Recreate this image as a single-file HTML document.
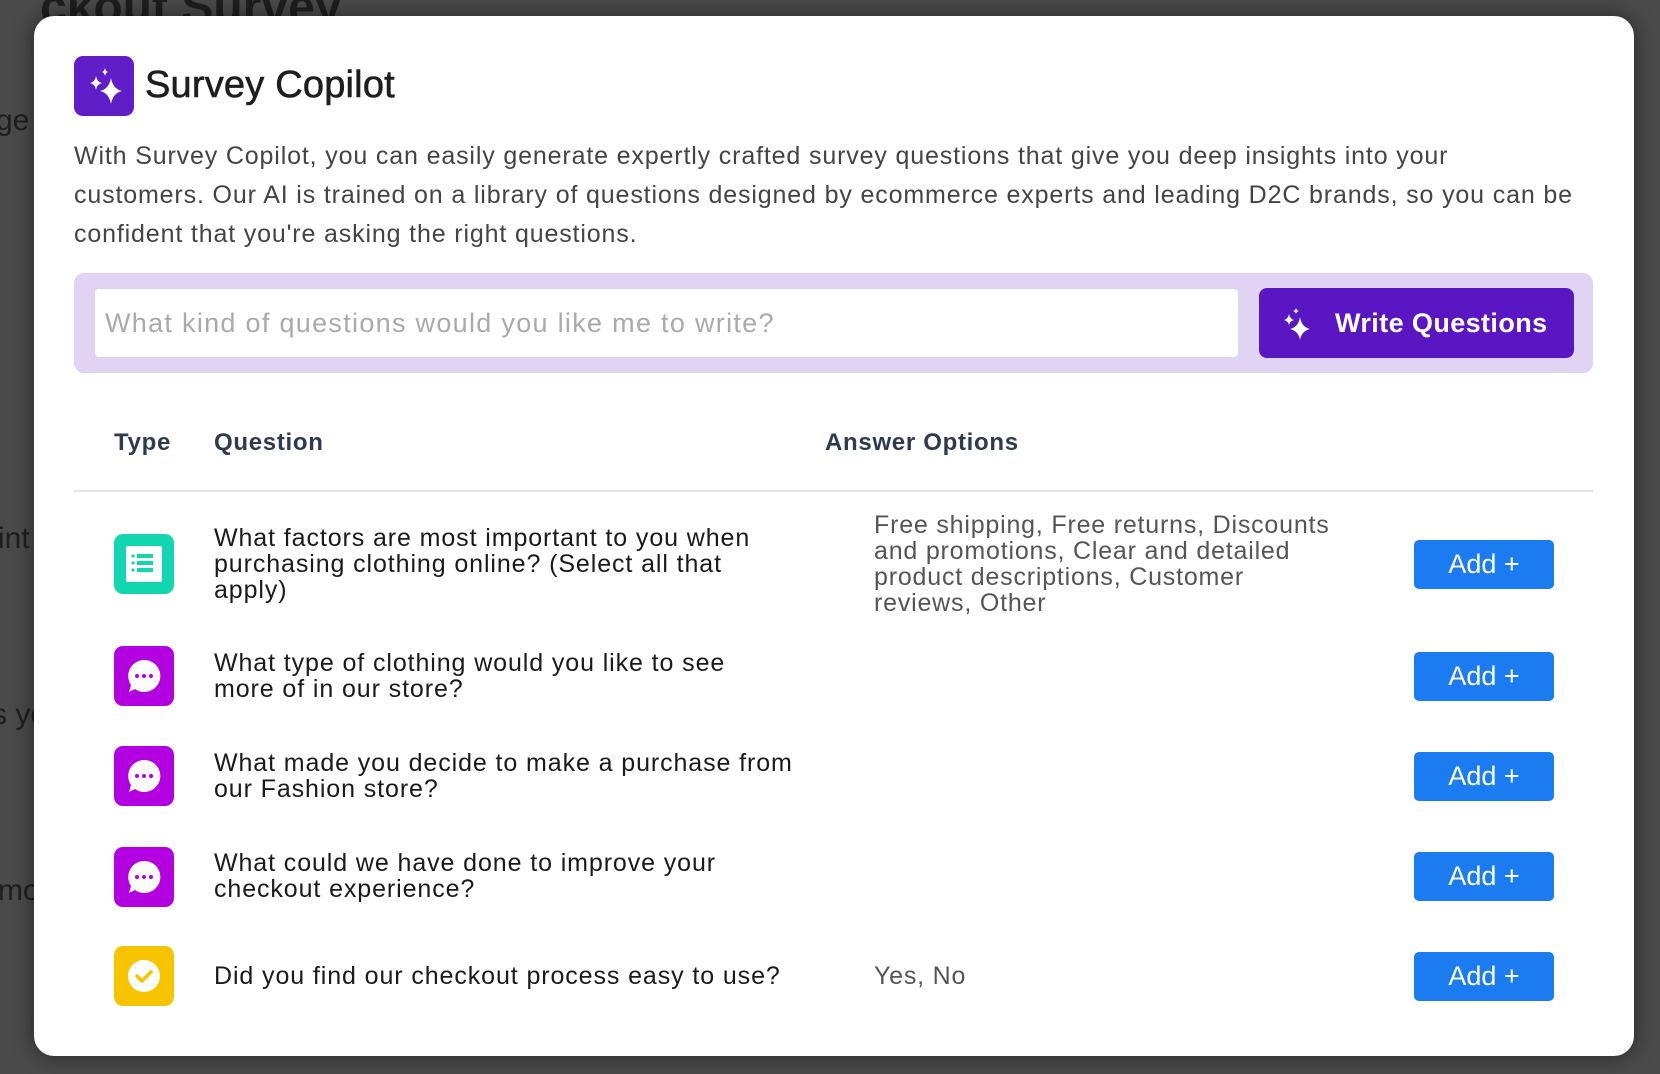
<!DOCTYPE html>
<html><head><meta charset="utf-8"><style>
*{box-sizing:border-box;margin:0;padding:0}
body{width:1660px;height:1074px;background:#4a4a4a;font-family:"Liberation Sans",sans-serif;position:relative;overflow:hidden}
.bg{position:absolute;color:#1e1e1e;font-size:30px}
.modal{position:absolute;left:34px;top:16px;width:1600px;height:1040px;background:#fff;border-radius:20px;box-shadow:0 0 20px rgba(0,0,0,.5)}
.abs{position:absolute;white-space:nowrap}
.logo{left:40px;top:40px;width:60px;height:60px;border-radius:9px;background:#5f1ec8}
.title{left:111px;top:47px;font-size:38px;color:#1e1e1e;line-height:44px;letter-spacing:0.2px;-webkit-text-stroke:0.6px #1e1e1e}
.desc{left:40px;top:121px;font-size:25px;line-height:39px;color:#444;letter-spacing:0.85px}
.box{left:40px;top:257px;width:1519px;height:100px;background:#e0d3f3;border-radius:10px}
.inp{left:61px;top:273px;width:1143px;height:68px;background:#fff;border-radius:4px;font-size:27px;color:#aaa;padding-left:10px;line-height:68px;letter-spacing:1.3px}
.btn{left:1225px;top:272px;width:315px;height:70px;background:#5b16c4;border-radius:8px;color:#fff;font-weight:bold;font-size:27px;line-height:70px;letter-spacing:0.4px}
.hd{top:411px;font-size:24px;font-weight:bold;color:#2d3a4f;line-height:32px;letter-spacing:0.7px}
.div{left:40px;top:474px;width:1519px;height:2px;background:#e4e4e4}
.ic{left:80px;width:60px;height:60px;border-radius:9px}
.q{left:180px;font-size:25px;line-height:26px;color:#1a1a1a;letter-spacing:0.9px}
.a{left:840px;font-size:25px;line-height:26px;color:#555;letter-spacing:0.8px}
.add{left:1380px;width:140px;height:49px;background:#1a7cf0;border-radius:5px;color:#fff;font-size:27px;line-height:49px;text-align:center}
</style></head><body>
<div class="bg" style="left:40px;top:-20px;font-size:48px;font-weight:bold">ckout Survey</div>
<div class="bg" style="left:-4px;top:104px">ge</div>
<div class="bg" style="left:-2px;top:522px">int</div>
<div class="bg" style="left:-8px;top:698px">s yo</div>
<div class="bg" style="left:-2px;top:874px">mo</div>
<div class="modal">
<div class="abs logo"><svg width="60" height="60" viewBox="0 0 60 60"><path d="M37 22 Q39 33 48 35 Q39 37 37 48 Q35 37 26 35 Q35 33 37 22Z" fill="#fff"/><path d="M22 20 Q23 26 28 27 Q23 28 22 34 Q21 28 16 27 Q21 26 22 20Z" fill="#fff"/><path d="M31 12 Q31.7 15.3 34 16 Q31.7 16.7 31 20 Q30.3 16.7 28 16 Q30.3 15.3 31 12Z" fill="#fff"/></svg></div>
<div class="abs title">Survey Copilot</div>
<div class="abs desc">With Survey Copilot, you can easily generate expertly crafted survey questions that give you deep insights into your<br>customers. Our AI is trained on a library of questions designed by ecommerce experts and leading D2C brands, so you can be<br>confident that you're asking the right questions.</div>
<div class="abs box"></div>
<div class="abs inp">What kind of questions would you like me to write?</div>
<div class="abs btn"><svg class="abs" style="left:20px;top:15px" width="40" height="40" viewBox="0 0 40 40"><path d="M21 14 Q22.5 24 31 26 Q22.5 28 21 37 Q19.5 28 11 26 Q19.5 24 21 14Z" fill="#fff"/><path d="M10 11 Q11 16 15 17 Q11 18 10 22 Q9 18 5 17 Q9 16 10 11Z" fill="#fff"/><path d="M17 5 Q17.6 7.5 20 8 Q17.6 8.5 17 11 Q16.4 8.5 14 8 Q16.4 7.5 17 5Z" fill="#fff"/></svg><span class="abs" style="left:76px">Write Questions</span></div>
<div class="abs hd" style="left:80px">Type</div>
<div class="abs hd" style="left:180px">Question</div>
<div class="abs hd" style="left:791px">Answer Options</div>
<div class="abs div"></div>

<div class="abs ic" style="top:518px;background:#12d6b0"><svg width="60" height="60"><rect x="12" y="12" width="36" height="36" rx="2" fill="#fff"/><circle cx="19" cy="22" r="1.6" fill="#12d6b0"/><circle cx="19" cy="29" r="1.6" fill="#12d6b0"/><circle cx="19" cy="36" r="1.6" fill="#12d6b0"/><rect x="23" y="20" width="16" height="4" fill="#12d6b0"/><rect x="23" y="27" width="16" height="4" fill="#12d6b0"/><rect x="23" y="34" width="16" height="4" fill="#12d6b0"/></svg></div>
<div class="abs q" style="top:509px">What factors are most important to you when<br>purchasing clothing online? (Select all that<br>apply)</div>
<div class="abs a" style="top:496px">Free shipping, Free returns, Discounts<br>and promotions, Clear and detailed<br>product descriptions, Customer<br>reviews, Other</div>
<div class="abs add" style="top:524px">Add +</div>

<svg width="0" height="0" style="position:absolute"><defs><g id="chat"><path d="M30 14 a16 16 0 1 1 -9 29 l-6 3 l2 -7 a16 16 0 0 1 13 -25Z" fill="#fff"/><circle cx="23" cy="30" r="2" fill="#b300e0"/><circle cx="30" cy="30" r="2" fill="#b300e0"/><circle cx="37" cy="30" r="2" fill="#b300e0"/></g></defs></svg>
<div class="abs ic" style="top:630px;background:#b300e0"><svg width="60" height="60"><use href="#chat"/></svg></div>
<div class="abs q" style="top:634px">What type of clothing would you like to see<br>more of in our store?</div>
<div class="abs add" style="top:636px">Add +</div>

<div class="abs ic" style="top:730px;background:#b300e0"><svg width="60" height="60"><use href="#chat"/></svg></div>
<div class="abs q" style="top:734px">What made you decide to make a purchase from<br>our Fashion store?</div>
<div class="abs add" style="top:736px">Add +</div>

<div class="abs ic" style="top:831px;background:#b300e0"><svg width="60" height="60"><use href="#chat"/></svg></div>
<div class="abs q" style="top:834px">What could we have done to improve your<br>checkout experience?</div>
<div class="abs add" style="top:836px">Add +</div>

<div class="abs ic" style="top:930px;background:#f7c500"><svg width="60" height="60"><circle cx="30" cy="30" r="16" fill="#fff"/><path d="M23 30 l5 5 l9 -9" stroke="#f7c500" stroke-width="3.5" fill="none" stroke-linecap="round" stroke-linejoin="round"/></svg></div>
<div class="abs q" style="top:947px">Did you find our checkout process easy to use?</div>
<div class="abs a" style="top:947px">Yes, No</div>
<div class="abs add" style="top:936px">Add +</div>
</div>
</body></html>
